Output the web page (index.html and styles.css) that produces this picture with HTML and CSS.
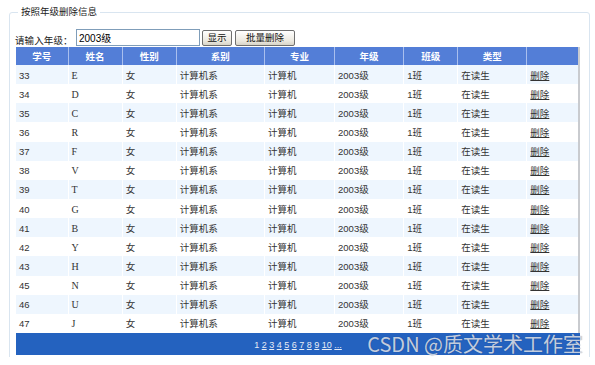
FILE: index.html
```html
<!DOCTYPE html>
<html lang="zh">
<head>
<meta charset="utf-8">
<title>按照年级删除信息</title>
<link rel="stylesheet" href="styles.css">
</head>
<body>
<div class="clip">
  <fieldset class="panel">
    <legend class="legend">按照年级删除信息</legend>
    <form class="search">
      <label class="label">请输入年级：</label>
      <input class="grade" type="text" value="2003级">
      <button class="btn btn-show" type="button">显示</button>
      <button class="btn btn-del" type="button">批量删除</button>
    </form>
    <div class="grid-wrap">
      <table class="grid">
        <colgroup>
          <col class="c1"><col class="c2"><col class="c3"><col class="c4"><col class="c5"><col class="c6"><col class="c7"><col class="c8"><col class="c9">
        </colgroup>
        <thead>
          <tr><th>学号</th><th>姓名</th><th>性别</th><th>系别</th><th>专业</th><th>年级</th><th>班级</th><th>类型</th><th></th></tr>
        </thead>
        <tbody>
          <tr><td>33</td><td class="nm">E</td><td>女</td><td>计算机系</td><td>计算机</td><td>2003级</td><td>1班</td><td>在读生</td><td><a class="del" href="#">删除</a></td></tr>
          <tr><td>34</td><td class="nm">D</td><td>女</td><td>计算机系</td><td>计算机</td><td>2003级</td><td>1班</td><td>在读生</td><td><a class="del" href="#">删除</a></td></tr>
          <tr><td>35</td><td class="nm">C</td><td>女</td><td>计算机系</td><td>计算机</td><td>2003级</td><td>1班</td><td>在读生</td><td><a class="del" href="#">删除</a></td></tr>
          <tr><td>36</td><td class="nm">R</td><td>女</td><td>计算机系</td><td>计算机</td><td>2003级</td><td>1班</td><td>在读生</td><td><a class="del" href="#">删除</a></td></tr>
          <tr><td>37</td><td class="nm">F</td><td>女</td><td>计算机系</td><td>计算机</td><td>2003级</td><td>1班</td><td>在读生</td><td><a class="del" href="#">删除</a></td></tr>
          <tr><td>38</td><td class="nm">V</td><td>女</td><td>计算机系</td><td>计算机</td><td>2003级</td><td>1班</td><td>在读生</td><td><a class="del" href="#">删除</a></td></tr>
          <tr><td>39</td><td class="nm">T</td><td>女</td><td>计算机系</td><td>计算机</td><td>2003级</td><td>1班</td><td>在读生</td><td><a class="del" href="#">删除</a></td></tr>
          <tr><td>40</td><td class="nm">G</td><td>女</td><td>计算机系</td><td>计算机</td><td>2003级</td><td>1班</td><td>在读生</td><td><a class="del" href="#">删除</a></td></tr>
          <tr><td>41</td><td class="nm">B</td><td>女</td><td>计算机系</td><td>计算机</td><td>2003级</td><td>1班</td><td>在读生</td><td><a class="del" href="#">删除</a></td></tr>
          <tr><td>42</td><td class="nm">Y</td><td>女</td><td>计算机系</td><td>计算机</td><td>2003级</td><td>1班</td><td>在读生</td><td><a class="del" href="#">删除</a></td></tr>
          <tr><td>43</td><td class="nm">H</td><td>女</td><td>计算机系</td><td>计算机</td><td>2003级</td><td>1班</td><td>在读生</td><td><a class="del" href="#">删除</a></td></tr>
          <tr><td>45</td><td class="nm">N</td><td>女</td><td>计算机系</td><td>计算机</td><td>2003级</td><td>1班</td><td>在读生</td><td><a class="del" href="#">删除</a></td></tr>
          <tr><td>46</td><td class="nm">U</td><td>女</td><td>计算机系</td><td>计算机</td><td>2003级</td><td>1班</td><td>在读生</td><td><a class="del" href="#">删除</a></td></tr>
          <tr><td>47</td><td class="nm">J</td><td>女</td><td>计算机系</td><td>计算机</td><td>2003级</td><td>1班</td><td>在读生</td><td><a class="del" href="#">删除</a></td></tr>
        </tbody>
      </table>
      <div class="pager">
        <span class="pg cur">1</span>
        <a class="pg" href="#">2</a>
        <a class="pg" href="#">3</a>
        <a class="pg" href="#">4</a>
        <a class="pg" href="#">5</a>
        <a class="pg" href="#">6</a>
        <a class="pg" href="#">7</a>
        <a class="pg" href="#">8</a>
        <a class="pg" href="#">9</a>
        <a class="pg" href="#">10</a>
        <a class="pg" href="#">...</a>
      </div>
      <div class="watermark">CSDN @质文学术工作室</div>
    </div>
  </fieldset>
</div>
</body>
</html>
```

FILE: styles.css
```css
html, body {
  margin: 0;
  padding: 0;
  background: #ffffff;
}

body {
  font-family: "Liberation Sans", "Noto Sans CJK SC", sans-serif;
  font-size: 9.5px;
  color: #222;
}

.clip {
  height: 357px;
  overflow: hidden;
}

.panel {
  margin: 6px 0 0 9px;
  width: 581px;
  box-sizing: border-box;
  height: 420px;
  border: 1px solid #d9e5f0;
  border-radius: 3px;
  padding: 0 0 0 6px;
  min-width: 0;
}

.legend {
  margin-left: 2px;
  padding: 0 3px;
  font-size: 9.5px;
  line-height: 12px;
  color: #222;
}

.search {
  display: flex;
  align-items: center;
  height: 17px;
  margin-top: 11px;
  margin-bottom: 1px;
}

.label {
  width: 61px;
  margin-left: -1px;
  margin-top: 5px;
  letter-spacing: 0.1px;
}

.grade {
  box-sizing: border-box;
  width: 124px;
  height: 17px;
  border: 1px solid #7f9db9;
  padding: 0 0 0 2px;
  font-family: "Liberation Sans", "Noto Sans CJK SC", sans-serif;
  font-size: 10px;
  color: #000;
  margin: 0;
}

.btn {
  box-sizing: border-box;
  height: 16px;
  margin: 0 0 0 2px;
  padding: 0;
  border: 1px solid #6f6f6f;
  border-radius: 2px;
  background: linear-gradient(#ffffff, #ece9e0 70%, #d8d4c8);
  font-family: "Liberation Sans", "Noto Sans CJK SC", sans-serif;
  font-size: 9.5px;
  color: #111;
  line-height: 13px;
}

.btn-show { width: 30px; }
.btn-del { width: 60px; margin-left: 3px; }

.grid-wrap {
  position: relative;
  width: 564px;
}

.grid {
  border-collapse: collapse;
  table-layout: fixed;
  width: 564px;
  border-right: 2px solid #c9cbcf;
}

.c1 { width: 52px; }
.c2 { width: 54px; }
.c3 { width: 54px; }
.c4 { width: 88px; }
.c5 { width: 70px; }
.c6 { width: 69px; }
.c7 { width: 54px; }
.c8 { width: 69px; }
.c9 { width: 52px; }

.grid th {
  background: #537ed7;
  color: #ffffff;
  font-weight: bold;
  height: 18px;
  padding: 1px 0 0 0;
  border-right: 1px solid #a9bfee;
  text-align: center;
  font-size: 9.5px;
  line-height: 17px;
  box-sizing: border-box;
}

.grid th:last-child { border-right: none; }

.grid td {
  height: 19.15px;
  padding: 2px 0 0 3px;
  border-right: 1px solid #ffffff;
  white-space: nowrap;
  overflow: hidden;
  color: #333;
  line-height: 12px;
  box-sizing: border-box;
}

.grid td:last-child { border-right: none; }

.grid tbody tr:nth-child(odd) td { background: #eef6fe; }
.grid tbody tr:nth-child(even) td { background: #ffffff; }

.grid td.nm {
  font-family: "Liberation Serif", "Noto Sans CJK SC", serif;
  font-size: 10px;
}

.del {
  color: #333;
  text-decoration: underline;
}

.pager {
  height: 22px;
  background: #2462bf;
  display: flex;
  justify-content: center;
  align-items: center;
  gap: 2.5px;
  font-size: 9px;
  padding-top: 2px;
  box-sizing: border-box;
}

.pg {
  color: #e6ecf6;
  text-decoration: underline;
}

.pg.cur { text-decoration: none; }

.watermark {
  position: absolute;
  right: -3px;
  bottom: 0;
  font-family: "Noto Sans CJK SC", "Liberation Sans", sans-serif;
  font-size: 20px;
  line-height: 22px;
  color: rgba(225, 230, 240, 0.85);
  text-shadow: 0 0 1px rgba(30, 50, 90, 0.6);
  white-space: nowrap;
  pointer-events: none;
}
```
